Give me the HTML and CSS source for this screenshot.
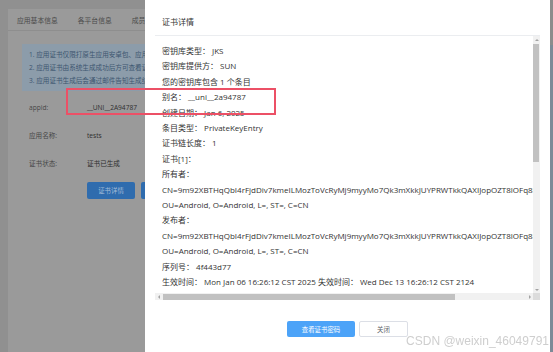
FILE: index.html
```html
<!DOCTYPE html>
<html lang="zh">
<head>
<meta charset="utf-8">
<title>证书详情</title>
<link rel="stylesheet" href="styles.css">
</head>
<body>
<div class="page">
  <div class="card">
    <div class="tabs">
      <span class="tab">应用基本信息</span>
      <span class="tab">各平台信息</span>
      <span class="tab">成员管理</span>
    </div>
    <div class="card-body">
      <div class="notice">
        <p>1. 应用证书仅限打原生应用安卓包、应用市场上架使用</p>
        <p>2. 应用证书由系统生成成功后方可查看证书详情</p>
        <p>3. 应用证书生成后会通过邮件告知生成结果</p>
      </div>
      <div class="row"><span class="lbl">appid:</span><span class="val">__UNI__2A94787</span></div>
      <div class="row"><span class="lbl">应用名称:</span><span class="val">tests</span></div>
      <div class="row"><span class="lbl">证书状态:</span><span class="val">证书已生成</span></div>
      <div class="actions"><span class="pbtn">证书详情</span><span class="pbtn">下载证书</span></div>
    </div>
  </div>
  <div class="edge"><div class="edge-top"></div><div class="edge-bot"></div></div>
</div>

<div class="dialog">
  <div class="dlg-title">证书详情</div>
  <div class="box">
    <div class="content">
      <div>密钥库类型： JKS</div>
      <div>密钥库提供方： SUN</div>
      <div>您的密钥库包含 1 个条目</div>
      <div>别名： __uni__2a94787</div>
      <div>创建日期： Jan 6, 2025</div>
      <div>条目类型： PrivateKeyEntry</div>
      <div>证书链长度： 1</div>
      <div>证书[1]：</div>
      <div>所有者：</div>
      <div>CN=9m92XBTHqQbI4rFjdDiv7kmeILMozToVcRyMj9myyMo7Qk3mXkkJUYPRWTkkQAXIJopOZT8lOFq8bLx2</div>
      <div>OU=Android, O=Android, L=, ST=, C=CN</div>
      <div>发布者：</div>
      <div>CN=9m92XBTHqQbI4rFjdDiv7kmeILMozToVcRyMj9myyMo7Qk3mXkkJUYPRWTkkQAXIJopOZT8lOFq8bLx2</div>
      <div>OU=Android, O=Android, L=, ST=, C=CN</div>
      <div>序列号： 4f443d77</div>
      <div>生效时间： Mon Jan 06 16:26:12 CST 2025 失效时间： Wed Dec 13 16:26:12 CST 2124</div>
    </div>
    <div class="vbar">
      <div class="arr"><i class="tri-up"></i></div>
      <div class="vthumb"></div>
      <div class="fill"></div>
      <div class="arr"><i class="tri-down"></i></div>
    </div>
    <div class="hbar">
      <div class="harr"><i class="tri-left"></i></div>
      <div class="hthumb"></div>
      <div class="fill"></div>
      <div class="harr"><i class="tri-right"></i></div>
    </div>
    <div class="corner"></div>
  </div>
  <div class="footer">
    <span class="btn btn-primary">查看证书密码</span>
    <span class="btn btn-default">关闭</span>
  </div>
</div>

<div class="highlight"></div>
<div class="watermark">CSDN @weixin_46049791</div>
</body>
</html>
```
FILE: styles.css
```css
* { box-sizing: border-box; margin: 0; padding: 0; }
html, body { width: 553px; height: 352px; overflow: hidden; }
body {
  background: #909090;
  font-family: "Open Sans", "Noto Sans CJK SC", sans-serif;
  color: #333;
}
.page {
  display: flex;
  height: 352px;
  padding: 9px 0 0 8px;
}
.card {
  flex: 1;
  background: #9a9a9a;
  display: flex;
  flex-direction: column;
}
.tabs {
  height: 22px;
  border-bottom: 1px solid #8e8e8e;
  display: flex;
  gap: 20px;
  padding: 8px 0 0 9px;
  font-size: 6.8px;
  line-height: 8px;
  color: #4a4a4a;
  white-space: nowrap;
}
.card-body {
  padding: 13px 0 0 14px;
  font-size: 6.6px;
  color: #3a3a3a;
}
.notice {
  background: #8c9caa;
  padding: 4px 7px;
  line-height: 13px;
  color: #3d5670;
  white-space: nowrap;
  overflow: hidden;
}
.row {
  height: 28px;
  display: flex;
  align-items: center;
  padding-left: 7px;
  white-space: nowrap;
}
.notice + .row { margin-top: 2px; }
.lbl { width: 58px; color: #474747; }
.val { color: #2e2e2e; }
.actions {
  display: flex;
  gap: 6px;
  margin-top: 5px;
  padding-left: 65px;
}
.pbtn {
  width: 48px;
  height: 17px;
  background: #2f6cae;
  border-radius: 2px;
  color: #a3bcd8;
  font-size: 6.4px;
  display: flex;
  align-items: center;
  justify-content: center;
  white-space: nowrap;
  overflow: hidden;
}
.edge {
  width: 3px;
  display: flex;
  flex-direction: column;
  margin-top: -9px;
}
.edge-top { height: 45px; background: #8c8c8c; }
.edge-bot { flex: 1; background: #7c8a97; }

.dialog {
  position: fixed;
  left: 145px;
  top: 0;
  width: 405px;
  height: 360px;
  background: #fff;
  padding: 0 10px;
}
.dlg-title {
  height: 35px;
  padding: 17px 0 0 7px;
  font-size: 8px;
  line-height: 10px;
  color: #333;
}
.box {
  border-top: 1px solid #ebedf0;
  display: grid;
  grid-template-columns: 378px 7px;
  grid-template-rows: 257px 7px;
}
.content {
  padding: 7px 0 0 7px;
  font-size: 8px;
  line-height: 15.4px;
  white-space: nowrap;
  overflow: hidden;
  color: #333;
}
.vbar {
  background: #f1f1f1;
  display: flex;
  flex-direction: column;
}
.arr {
  height: 7px;
  display: flex;
  align-items: center;
  justify-content: center;
}
.vthumb {
  height: 118px;
  margin: 1px 0 0;
  background: #c1c1c1;
  width: 6px;
}
.fill { flex: 1; }
.hbar {
  background: #f1f1f1;
  display: flex;
}
.harr {
  width: 7px;
  display: flex;
  align-items: center;
  justify-content: center;
}
.hthumb {
  width: 292px;
  margin-left: 1px;
  height: 6px;
  background: #c1c1c1;
  align-self: center;
}
.corner { background: #dcdcdc; }
.tri-up, .tri-down, .tri-left, .tri-right { display: block; width: 0; height: 0; }
.tri-up { border-left: 2px solid transparent; border-right: 2px solid transparent; border-bottom: 2px solid #a3a3a3; }
.tri-down { border-left: 2px solid transparent; border-right: 2px solid transparent; border-top: 2px solid #a3a3a3; }
.tri-left { border-top: 2px solid transparent; border-bottom: 2px solid transparent; border-right: 2px solid #a3a3a3; }
.tri-right { border-top: 2px solid transparent; border-bottom: 2px solid transparent; border-left: 2px solid #a3a3a3; }

.footer {
  display: flex;
  justify-content: center;
  gap: 4px;
  margin-top: 21px;
}
.btn {
  height: 16px;
  border-radius: 2px;
  font-size: 6.4px;
  display: flex;
  align-items: center;
  justify-content: center;
  white-space: nowrap;
}
.btn-primary { width: 68px; background: #4ca3f8; color: #fff; }
.btn-default { width: 49px; border: 1px solid #dcdfe6; color: #606266; background: #fff; }

.highlight {
  position: fixed;
  left: 66px;
  top: 88px;
  width: 210px;
  height: 27px;
  border: 2px solid #ec5066;
}
.watermark {
  position: fixed;
  right: 4px;
  bottom: 4px;
  font-family: "Liberation Sans", sans-serif;
  font-size: 12px;
  line-height: 14px;
  color: rgba(185, 185, 185, 0.7);
  white-space: nowrap;
}
```
